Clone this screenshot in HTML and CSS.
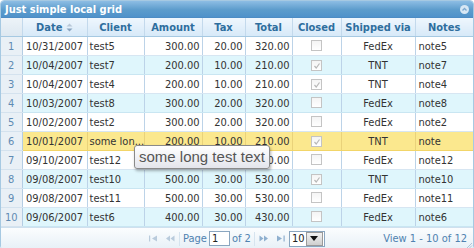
FILE: index.html
```html
<!DOCTYPE html>
<html>
<head>
    <link rel="stylesheet" href="styles.css">
</head>
<body>
    <div class="grid">
        <div class="caption">
            <span>Just simple local grid</span>
            <span class="closeBtn"><svg width="9" height="9" viewBox="0 0 9 9"><circle cx="4.5" cy="4.5" r="4.5" fill="#d7e7f4"/><path d="M2.5 5.5 L4.5 3.5 L6.5 5.5" stroke="#7ca8cf" stroke-width="1.3" fill="none"/></svg></span>
        </div>
        <table class="data">
            <colgroup>
                <col style="width: 21px">
                <col style="width: 65px">
                <col style="width: 57px">
                <col style="width: 58px">
                <col style="width: 43px">
                <col style="width: 47px">
                <col style="width: 49px">
                <col style="width: 74px">
                <col>
            </colgroup>
            <thead>
                <tr>
                    <th></th>
                    <th>Date <svg class="sortIcon" width="7" height="9" viewBox="0 0 7 9"><path d="M0.5 3.5 L3.5 0.5 L6.5 3.5 Z" fill="#b8c8d8"/><path d="M0.5 5.5 L3.5 8.5 L6.5 5.5 Z" fill="#8aa4bf"/></svg></th>
                    <th>Client</th>
                    <th>Amount</th>
                    <th>Tax</th>
                    <th>Total</th>
                    <th>Closed</th>
                    <th>Shipped via</th>
                    <th>Notes</th>
                </tr>
            </thead>
            <tbody id="rows"></tbody>
        </table>
        <div class="pager">
            <div class="pagerCenter">
                <span class="navIcon"><svg width="10" height="7" viewBox="0 0 10 7"><rect x="1" y="0.5" width="1.2" height="6" fill="#b9cbdc"/><path d="M9 0.5 L4 3.5 L9 6.5 Z" fill="#b9cbdc"/></svg></span>
                <span class="navIcon"><svg width="10" height="7" viewBox="0 0 10 7"><path d="M5 0.5 L1 3.5 L5 6.5 Z M9.5 0.5 L5.5 3.5 L9.5 6.5 Z" fill="#b9cbdc"/></svg></span>
                <span class="sep"></span>
                <span>Page</span>
                <span class="pageBox">1</span>
                <span>of 2</span>
                <span class="sep"></span>
                <span class="navIcon"><svg width="10" height="7" viewBox="0 0 10 7"><path d="M0.5 0.5 L4.5 3.5 L0.5 6.5 Z M5 0.5 L9 3.5 L5 6.5 Z" fill="#8fb0cf"/></svg></span>
                <span class="navIcon"><svg width="10" height="7" viewBox="0 0 10 7"><path d="M1 0.5 L6 3.5 L1 6.5 Z" fill="#8fb0cf"/><rect x="7.5" y="0.5" width="1.2" height="6" fill="#8fb0cf"/></svg></span>
                <span class="select">10<span class="selectBtn"><svg width="8" height="5" viewBox="0 0 8 5"><path d="M0 0 L8 0 L4 5 Z" fill="#111"/></svg></span></span>
            </div>
            <div class="pagerInfo">View 1 - 10 of 12</div>
            <svg class="grip" width="7" height="7" viewBox="0 0 7 7"><path d="M6 1 L1 6 M6 3.5 L3.5 6" stroke="#b0c4d8" stroke-width="1"/></svg>
        </div>
        <div class="tooltip">some long test text</div>
    </div>
    <script>
        var data = [
            ["10/31/2007", "test5", "300.00", "20.00", "320.00", false, "FedEx", "note5"],
            ["10/04/2007", "test7", "200.00", "10.00", "210.00", true, "TNT", "note7"],
            ["10/04/2007", "test4", "200.00", "10.00", "210.00", true, "TNT", "note4"],
            ["10/03/2007", "test8", "300.00", "20.00", "320.00", false, "FedEx", "note8"],
            ["10/02/2007", "test2", "300.00", "20.00", "320.00", false, "FedEx", "note2"],
            ["10/01/2007", "some lon...", "200.00", "10.00", "210.00", true, "TNT", "note"],
            ["09/10/2007", "test12", "500.00", "30.00", "530.00", false, "FedEx", "note12"],
            ["09/08/2007", "test10", "500.00", "30.00", "530.00", true, "TNT", "note10"],
            ["09/08/2007", "test11", "500.00", "30.00", "530.00", false, "FedEx", "note11"],
            ["09/06/2007", "test6", "400.00", "30.00", "430.00", false, "FedEx", "note6"]
        ];

        var tbody = document.getElementById("rows");
        data.forEach(function(r, i) {
            var tr = document.createElement("tr");
            if (i % 2 == 1) tr.className = "alt";
            if (i == 5) tr.className = "selected";
            var check = '<span class="check">' + (r[5] ? '<svg width="8" height="8" viewBox="0 0 8 8"><path d="M1.5 4 L3.2 6 L6.5 1.5" stroke="#b8b8b8" stroke-width="1.2" fill="none"/></svg>' : '') + '</span>';
            tr.innerHTML =
                '<td class="rn">' + (i + 1) + '</td>' +
                '<td class="center">' + r[0] + '</td>' +
                '<td>' + r[1] + '</td>' +
                '<td class="right">' + r[2] + '</td>' +
                '<td class="right">' + r[3] + '</td>' +
                '<td class="right">' + r[4] + '</td>' +
                '<td class="center">' + check + '</td>' +
                '<td class="center">' + r[6] + '</td>' +
                '<td>' + r[7] + '</td>';
            tbody.appendChild(tr);
        });
    </script>
</body>
</html>
```

FILE: styles.css
```css
body {
    margin: 0px;
    padding: 0px;
    background: #fff;
    font-family: "DejaVu Sans Condensed", "DejaVu Sans", sans-serif;
    font-size: 11px;
}

.grid {
    position: relative;
    width: 472px;
    border: 1px solid #a6c9e2;
    border-radius: 4px;
    overflow: hidden;
}

.caption {
    display: flex;
    align-items: center;
    justify-content: space-between;
    height: 16px;
    padding: 0 4px 0 4px;
    background: linear-gradient(#8dbde4, #5c9ccc 55%, #4f92ca);
    color: #fff;
    font-weight: bold;
    font-size: 11px;
    border-bottom: 1px solid #4c8cc4;
}

.closeBtn {
    display: flex;
}

.data {
    width: 100%;
    border-collapse: collapse;
    table-layout: fixed;
}

.data th {
    height: 18px;
    padding: 0;
    background: linear-gradient(#eef6fd, #d7e9f8);
    color: #2e6e9e;
    font-weight: bold;
    border-right: 1px solid #c3d9ec;
    border-bottom: 1px solid #a6c9e2;
    white-space: nowrap;
}

.data th:first-child {
    background: linear-gradient(#edf3f8, #dde8f1);
}

.sortIcon {
    vertical-align: -1px;
}

.data td {
    height: 18px;
    padding: 0 2px;
    color: #333;
    border-right: 1px solid #bcd3e8;
    border-bottom: 1px solid #d7e6f2;
    white-space: nowrap;
    overflow: hidden;
}

.data th:last-child, .data td:last-child {
    border-right: none;
}

.data td:last-child {
    padding-left: 3px;
}

.data tr.alt td {
    background: #dff6fc;
    border-bottom-color: #c9e6f2;
}

.data tr.selected td {
    background: #fbe88e;
    border-bottom-color: #f2d568;
    border-right-color: #e9d27a;
}

.data td.rn, .data tr.alt td.rn, .data tr.selected td.rn {
    background: #e9f0f6;
    color: #5f8bb3;
    text-align: center;
    padding: 0;
    border-right-color: #b4cde3;
    border-bottom-color: #d4e2ee;
}

.data td.center {
    text-align: center;
}

.data td.right {
    text-align: right;
}

.check {
    display: inline-flex;
    align-items: center;
    justify-content: center;
    width: 9px;
    height: 9px;
    border: 1px solid #c4c4c4;
    background: linear-gradient(#f4f4f4, #fff);
    vertical-align: -1px;
}

.pager {
    position: relative;
    display: flex;
    align-items: center;
    height: 21px;
    background: linear-gradient(#fbfdfe, #e7f0f7);
    border-top: 1px solid #cfe0ee;
    color: #4f82b0;
}

.pagerCenter {
    display: flex;
    align-items: center;
    gap: 2px;
    margin-left: 146px;
}

.navIcon {
    display: flex;
    width: 12px;
    justify-content: center;
}

.sep {
    width: 1px;
    height: 14px;
    background: #d6e4ef;
    margin: 0 1px;
}

.navIcon + .navIcon {
    margin-left: 3px;
}

.pageBox {
    display: inline-block;
    width: 17px;
    height: 13px;
    line-height: 13px;
    padding-left: 2px;
    background: #fff;
    border: 1px solid #8aa6c0;
    color: #222;
}

.select {
    display: inline-flex;
    align-items: center;
    width: 32px;
    height: 14px;
    padding-left: 2px;
    background: #fff;
    border: 1px solid #8aa6c0;
    color: #222;
    justify-content: space-between;
}

.selectBtn {
    display: flex;
    align-items: center;
    justify-content: center;
    width: 15px;
    height: 12px;
    margin-right: 1px;
    background: linear-gradient(#f2f2f2, #cfcfcf);
    border: 1px solid #9a9a9a;
}

.pagerInfo {
    margin-left: auto;
    margin-right: 6px;
}

.grip {
    position: absolute;
    right: 0;
    bottom: 0;
}

.tooltip {
    position: absolute;
    left: 133px;
    top: 144px;
    padding: 2px 4px 3px 4px;
    background: linear-gradient(#ffffff, #e4e5ec);
    border: 1px solid #8a8a8a;
    border-radius: 3px;
    box-shadow: 1px 2px 3px rgba(0, 0, 0, 0.3);
    color: #555;
    font-family: "Liberation Sans", sans-serif;
    font-size: 15px;
    white-space: nowrap;
}
```
